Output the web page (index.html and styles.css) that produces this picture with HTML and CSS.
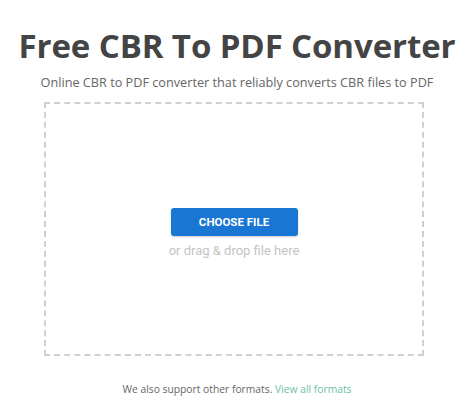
FILE: index.html
```html
<!DOCTYPE html>
<html lang="en">
<head>
<meta charset="utf-8">
<title>Free CBR To PDF Converter</title>
<link rel="stylesheet" href="styles.css">
</head>
<body>
<main class="page">
  <h1 class="title">Free CBR To PDF Converter</h1>
  <p class="subtitle">Online CBR to PDF converter that reliably converts CBR files to PDF</p>
  <section class="dropzone">
    <button class="choose" type="button">CHOOSE FILE</button>
    <p class="hint">or drag &amp; drop file here</p>
  </section>
  <p class="formats">We also support other formats. <a class="link" href="#">View all formats</a></p>
</main>
</body>
</html>
```

FILE: styles.css
```css
* { box-sizing: border-box; }
html, body { margin: 0; padding: 0; background: #fff; }
body { font-family: "Open Sans", "Liberation Sans", sans-serif; }
.page {
  width: 474px;
  display: flex;
  flex-direction: column;
  align-items: center;
  padding-top: 24px;
}
.title {
  margin: 0;
  font-size: 33px;
  line-height: 44px;
  font-weight: 700;
  color: #444;
  letter-spacing: -0.1px;
}
.subtitle {
  margin: 4px 0 0;
  font-size: 12.7px;
  line-height: 20px;
  color: #666;
}
.dropzone {
  margin-top: 10px;
  margin-left: -6px;
  width: 380px;
  height: 254px;
  border: 2px dashed #d0d0d0;
  display: flex;
  flex-direction: column;
  align-items: center;
  justify-content: center;
  padding-top: 9px;
}
.choose {
  width: 127px;
  height: 28px;
  border: none;
  border-radius: 3px;
  background: #1976d2;
  color: #fff;
  font-family: Roboto, "Liberation Sans", sans-serif;
  font-weight: 700;
  font-size: 11.5px;
  box-shadow: 0 1px 2px rgba(0,0,0,0.2);
  cursor: pointer;
}
.hint {
  margin: 6px 0 0;
  font-family: Roboto, "Liberation Sans", sans-serif;
  font-size: 13px;
  line-height: 18px;
  color: #c4c4c4;
}
.formats {
  margin: 25px 0 0;
  font-size: 10.3px;
  line-height: 16px;
  color: #666;
}
.link { color: #6dbfa6; text-decoration: none; }
```
